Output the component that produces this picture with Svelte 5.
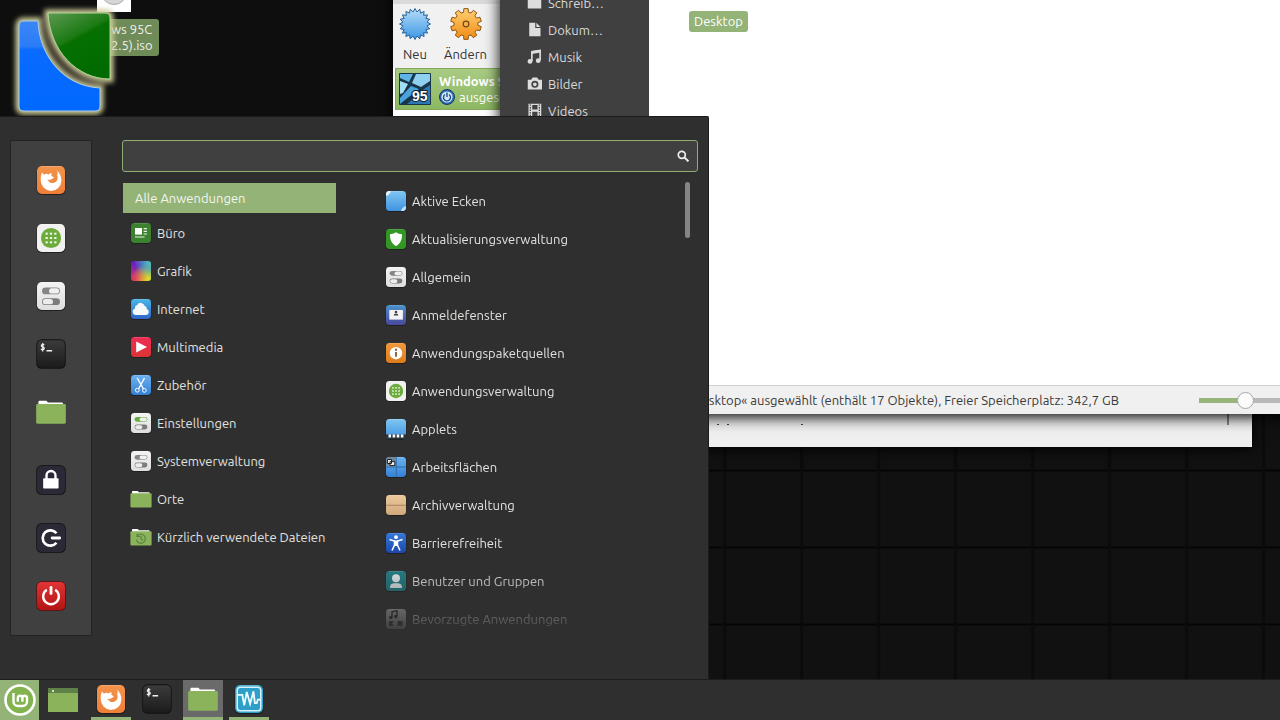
<script>
  const favourites = [
    { icon: 'firefox', label: 'Firefox' },
    { icon: 'software', label: 'Anwendungsverwaltung' },
    { icon: 'system', label: 'Systemeinstellungen' },
    { icon: 'terminal', label: 'Terminal' },
    { icon: 'folder', label: 'Dateien' }
  ];
  const session = [
    { icon: 'lock', label: 'Bildschirm sperren' },
    { icon: 'logout', label: 'Abmelden' },
    { icon: 'power', label: 'Beenden' }
  ];
  const categories = [
    { icon: 'office', label: 'Büro' },
    { icon: 'graphics', label: 'Grafik' },
    { icon: 'internet', label: 'Internet' },
    { icon: 'media', label: 'Multimedia' },
    { icon: 'scissors', label: 'Zubehör' },
    { icon: 'settings', label: 'Einstellungen' },
    { icon: 'system', label: 'Systemverwaltung' },
    { icon: 'folder', label: 'Orte' },
    { icon: 'recent', label: 'Kürzlich verwendete Dateien' }
  ];
  const apps = [
    { icon: 'corners', label: 'Aktive Ecken' },
    { icon: 'shield', label: 'Aktualisierungsverwaltung' },
    { icon: 'system', label: 'Allgemein' },
    { icon: 'login', label: 'Anmeldefenster' },
    { icon: 'info', label: 'Anwendungspaketquellen' },
    { icon: 'software', label: 'Anwendungsverwaltung' },
    { icon: 'applets', label: 'Applets' },
    { icon: 'workspaces', label: 'Arbeitsflächen' },
    { icon: 'archive', label: 'Archivverwaltung' },
    { icon: 'access', label: 'Barrierefreiheit' },
    { icon: 'user', label: 'Benutzer und Gruppen' },
    { icon: 'preferred', label: 'Bevorzugte Anwendungen' }
  ];
  const places = [
    { icon: 'desk', label: 'Schreib…' },
    { icon: 'doc', label: 'Dokum…' },
    { icon: 'music', label: 'Musik' },
    { icon: 'camera', label: 'Bilder' },
    { icon: 'film', label: 'Videos' }
  ];
  const tasks = [
    { icon: 'firefox', label: 'Firefox', open: true },
    { icon: 'terminal', label: 'Terminal' },
    { icon: 'folder', label: 'Dateien', open: true, active: true },
    { icon: 'monitor', label: 'Systemüberwachung', open: true }
  ];

  let query = $state('');
  let zoom = $state(31);

  function star(points, outer, inner) {
    const out = [];
    for (let i = 0; i < points * 2; i++) {
      const r = i % 2 ? inner : outer;
      const a = (Math.PI * i) / points;
      out.push(`${(16 + r * Math.sin(a)).toFixed(2)},${(16 - r * Math.cos(a)).toFixed(2)}`);
    }
    return out.join(' ');
  }

  function gear(teeth, outer, inner) {
    const out = [];
    const step = (Math.PI * 2) / teeth;
    for (let i = 0; i < teeth; i++) {
      for (const [f, r] of [[-0.32, inner], [-0.22, outer], [0.22, outer], [0.32, inner]]) {
        const a = step * (i + f);
        out.push(`${(16 + r * Math.sin(a)).toFixed(2)},${(16 - r * Math.cos(a)).toFixed(2)}`);
      }
    }
    return out.join(' ');
  }
</script>

{#snippet tile(fill)}
  <rect x="-0.3" y="0.3" width="20.6" height="20.4" rx="3.6" fill="#141414" opacity="0.7" />
  <rect width="20" height="20" rx="3.4" {fill} />
  <path d="M3 0.4h14" stroke="#fff" stroke-opacity="0.25" stroke-width="0.6" />
{/snippet}

{#snippet folder()}
  <path d="M1 5V2.8q0-.8.8-.8h5l1 1.200H17.800q.8 0 .8.8v2H1z" fill="#fff" />
  <rect x="-0.6" y="4.200" width="21.2" height="14.200" rx="1" fill="#8ab35c" />
{/snippet}

{#snippet icon(name)}
  <svg class="icon" viewBox="0 0 20 20" aria-hidden="true">
    {#if name === 'firefox'}
      {@render tile('url(#g-orange)')}
      <path d="M3.600 4.600 5 6.200C6 5.500 7.200 5.400 8.400 6c.8-.7 1.600-.8 2.200-.700-.8.8-.5 2 1.500 2.600-.1 1.200-1.900 1.300-2.700 2.100-.9-.2-1.600-.1-2.100.2 1.200.2 1.300 1.700 3 1.900 2.200.3 4.200-1 4.400-3.200.1-1.300-.1-2.200-.7-3.100l1 .3c-.1-1.200-.5-2-1.200-2.800C16.300 4.700 17.500 7.600 17.400 10.500A7.300 7.300 0 0 1 2.700 10.400C2.600 8.200 2.800 6.200 3.600 4.600z" fill="#fff" />
    {:else if name === 'software'}
      {@render tile('#f1f1ef')}
      <circle cx="10" cy="10" r="7.2" fill="#6cab3c" />
      {#each [6.9, 10, 13.1] as x}
        {#each [6.9, 10, 13.1] as y}
          <rect x={x - 0.8} y={y - 0.7} width="1.6" height="1.400" fill="#f4faee" />
        {/each}
      {/each}
    {:else if name === 'system' || name === 'settings'}
      {@render tile('url(#g-light)')}
      <rect x="3.600" y="3.900" width="12.800" height="4.900" rx="2.450" fill={name === 'settings' ? '#62ad35' : '#858585'} />
      <rect x="8.600" y="4.500" width="7.200" height="3.700" rx="1.850" fill="#f0f0f0" />
      <rect x="3.600" y="11.600" width="12.800" height="4.900" rx="2.450" fill="#7b7b7b" />
      <rect x="4.200" y="12.200" width="7.200" height="3.700" rx="1.850" fill="#ececec" />
    {:else if name === 'terminal'}
      <rect x="-0.500" y="-0.500" width="21" height="21" rx="3.800" fill="#111" />
      <rect x="0.100" y="0.100" width="19.800" height="19.800" rx="3.200" fill="url(#g-dark)" />
      <path d="M5.200 3.600C4.200 2.800 2.800 3.400 3.200 4.400c.3.700 2 .5 2 1.500S3.600 7.200 2.800 6.400M4.100 2.200v6" fill="none" stroke="#eee" stroke-width="0.900" />
      <path d="M6.800 7.700h4" stroke="#fff" stroke-width="1" />
    {:else if name === 'folder'}
      {@render folder()}
    {:else if name === 'recent'}
      {@render folder()}
      <path d="M6.700 8.500a4.500 4.500 0 1 1-1.300 4M6 6.700v2.800h2.800M10 8.700V12l2 1.200" fill="none" stroke="#55803a" stroke-width="1.100" />
    {:else if name === 'lock'}
      <rect x="-0.500" y="-0.500" width="21" height="21" rx="3.800" fill="#0d0d0f" />
      <rect width="20" height="20" rx="3.300" fill="#2c2937" />
      <rect x="4.400" y="8.800" width="11" height="7.200" rx="0.600" fill="#fff" />
      <path d="M6.800 9.300V6.800a3.200 3.200 0 0 1 6.400 0v2.500" fill="none" stroke="#fff" stroke-width="1.700" />
    {:else if name === 'logout'}
      <rect x="-0.500" y="-0.500" width="21" height="21" rx="3.800" fill="#0d0d0f" />
      <rect width="20" height="20" rx="3.300" fill="#2c2937" />
      <path d="M13.900 6.600A5.500 5.500 0 1 0 13.900 13.400" fill="none" stroke="#fff" stroke-width="1.900" />
      <path d="M10.800 10h5.400" stroke="#fff" stroke-width="2" stroke-linecap="round" />
    {:else if name === 'power'}
      <rect x="-0.500" y="-0.500" width="21" height="21" rx="3.800" fill="#5d0b0b" />
      <rect width="20" height="20" rx="3.300" fill="url(#g-red)" />
      <path d="M7 5.600A5.600 5.600 0 1 0 13 5.600" fill="none" stroke="#fff" stroke-width="1.700" />
      <path d="M10 3.800v4.400" stroke="#fff" stroke-width="2" stroke-linecap="round" />
    {:else if name === 'office'}
      {@render tile('#3c8130')}
      <path d="M4 5h7v6.600H4z" fill="#fff" />
      <path d="M12.600 5.700H16M12.600 8.300H16M12.600 11H16M4 14h9.600" stroke="#e8f3e4" stroke-width="1.200" />
    {:else if name === 'graphics'}
      <foreignObject x="0" y="0" width="20" height="20"><div class="spectrum"></div></foreignObject>
    {:else if name === 'internet'}
      {@render tile('url(#g-net)')}
      <path d="M5 16a3.300 3.300 0 0 1-.8-6.500 2.800 2.800 0 0 1 2-3.500 4 4 0 0 1 7.400.8 3.200 3.200 0 0 1 2.200 3.200 3.100 3.100 0 0 1-1 6z" fill="#f7f8fa" />
    {:else if name === 'media'}
      {@render tile('url(#g-media)')}
      <path d="M5.200 4.400v11.200L16 10z" fill="#fff" />
    {:else if name === 'scissors'}
      {@render tile('url(#g-blue)')}
      <path d="M6.200 3 12.500 14M13.500 3 7.500 14" stroke="#fff" stroke-width="1.400" />
      <circle cx="6.300" cy="15.200" r="1.900" fill="none" stroke="#fff" />
      <circle cx="13.400" cy="15.400" r="1.900" fill="none" stroke="#fff" />
    {:else if name === 'corners'}
      {@render tile('url(#g-sky)')}
      <path d="M0 5V3.400Q0 0 3.400 0H5Q4 3.500 0 5z" fill="#e8f4fd" />
      <path d="M20 15v1.600q0 3.400-3.400 3.400H15q1-4 5-5z" fill="#c6e2fa" />
    {:else if name === 'shield'}
      {@render tile('#329725')}
      <path d="M10 3.200Q12.500 5 16 5.200C16.200 11 14 14.800 10 17 6 14.800 3.800 11 4 5.200 7.500 5 10 3.200 10 3.200z" fill="#fff" />
    {:else if name === 'login'}
      {@render tile('url(#g-login)')}
      <rect x="3.300" y="5" width="13.600" height="9.600" fill="#f3f3f6" />
      <circle cx="10" cy="7" r="1.300" fill="#444" />
      <path d="M7.700 10.400q0-2 2.300-2t2.300 2z" fill="#444" />
    {:else if name === 'info'}
      {@render tile('url(#g-info)')}
      <circle cx="10" cy="10.200" r="6.200" fill="#fff" />
      <path d="M10 9v4.800" stroke="#8b6a3e" stroke-width="2" />
      <circle cx="10" cy="6.800" r="1.200" fill="#8b6a3e" />
    {:else if name === 'applets'}
      {@render tile('url(#g-sky)')}
      <path d="M0 15.500h20v1.100q0 3.400-3.400 3.400H3.400Q0 20 0 16.600z" fill="#24313b" />
      <path d="M2.500 17h15" stroke="#fff" stroke-width="3" stroke-dasharray="2.600 1.500" />
    {:else if name === 'workspaces'}
      {@render tile('url(#g-blue)')}
      <path d="M10.300 0v20M0 10h20" stroke="#2a69a8" stroke-width="0.900" />
      <path d="M0 9.500V3.400Q0 0 3.400 0H9.800v9.500z" fill="#6f8796" />
      <path d="M1.500 2.500h4v4h-4zM4 4.600h4.800v4H4z" fill="#eee" stroke="#222" stroke-width="1" />
    {:else if name === 'archive'}
      {@render tile('url(#g-tan)')}
      <path d="M0 10.300h20" stroke="#a17e5c" stroke-width="0.900" />
    {:else if name === 'access'}
      {@render tile('url(#g-access)')}
      <circle cx="10" cy="4.200" r="1.900" fill="#fff" />
      <path d="M3.500 6.500 8.500 8v4L6 17.500M16.500 6.500 11.500 8v4l2.500 5.500" fill="none" stroke="#fff" stroke-width="1.500" />
      <path d="M8 7.500h4V13H8z" fill="#fff" />
    {:else if name === 'user'}
      {@render tile('#247e86')}
      <circle cx="10" cy="7.300" r="4" fill="#e6f0f2" />
      <path d="M4 17q-.2-4.500 4-4.800h4q4.200.3 4 4.800z" fill="#e6f0f2" />
    {:else if name === 'preferred'}
      {@render tile('#b8b8b8')}
      <path d="M6 8.500V2.800l5-1v5.500" fill="none" stroke="#222" stroke-width="1.400" />
      <circle cx="4.800" cy="8.500" r="1.700" fill="#222" />
      <circle cx="9.800" cy="7.500" r="1.700" fill="#222" />
      <path d="M11.500 12h5v5h-5zM3 12h5l-2 2.500 2 2.500H3z" fill="#333" />
    {:else if name === 'monitor'}
      {@render tile('#2d9fc9')}
      <rect x="1.600" y="1.600" width="16.800" height="16.800" rx="2.200" fill="none" stroke="#d9f1fa" stroke-width="1.100" />
      <path d="M1.600 7h3.600L6.600 14.500 8.400 5l2.400 8.500L13.200 4.500l1 8.500h1.300l.8-2.500h2" fill="none" stroke="#eefaff" stroke-width="1.300" />
    {:else if name === 'desk'}
      <path d="M1 1h18v17H1z" fill="#ddd" />
    {:else if name === 'doc'}
      <path d="M3 1h8v7h7v11H3zM12.500 1 18 6.800h-5.500z" fill="#ddd" />
    {:else if name === 'music'}
      <path d="M6.500 16V3.500l11-1.500V15" fill="none" stroke="#ddd" stroke-width="2.200" />
      <path d="M6 3 18.500 1v3.500L6 6.500z" fill="#ddd" />
      <circle cx="4" cy="16.500" r="3.200" fill="#ddd" />
      <circle cx="15" cy="15.500" r="3.200" fill="#ddd" />
    {:else if name === 'camera'}
      <path d="M1 5h4.500l2-3h6l2 3H20v13H1z" fill="#ddd" />
      <circle cx="10.500" cy="11" r="3.600" fill="#ddd" stroke="#404040" stroke-width="2.200" />
    {:else if name === 'film'}
      <path d="M2 1h17v18H2z" fill="#ddd" />
      <path d="M7 2.500h7v6H7zM7 11.500h7v6H7z" fill="#404040" />
      <path d="M4.500 2v16M16.500 2v16" stroke="#404040" stroke-width="1.700" stroke-dasharray="1.800 1.600" />
    {/if}
  </svg>
{/snippet}

<svg class="defs" width="0" height="0" aria-hidden="true">
  <defs>
    {#each [
      ['g-orange', '#f3934a', '#ee7f38'],
      ['g-light', '#f4f4f4', '#dedede'],
      ['g-dark', '#3b3b3b', '#1b1b1b'],
      ['g-red', '#e03534', '#b31414'],
      ['g-net', '#49b6e8', '#2f66c8'],
      ['g-media', '#ee2d55', '#dc3434'],
      ['g-blue', '#6cb2f0', '#3580d6'],
      ['g-sky', '#7fc6f2', '#3f93df'],
      ['g-login', '#4a93cb', '#4a479c'],
      ['g-info', '#ef9a3c', '#de7c1c'],
      ['g-tan', '#ecc99c', '#d0a87c'],
      ['g-access', '#3378d6', '#1d47ac'],
      ['g-burst', '#b5dcf8', '#3b97e4'],
      ['g-gear', '#ffcf74', '#f08c13']
    ] as [id, from, to]}
      <linearGradient {id} x1="0" y1="0" x2="0" y2="1">
        <stop offset="0" stop-color={from} />
        <stop offset="1" stop-color={to} />
      </linearGradient>
    {/each}
  </defs>
</svg>

<div class="screen">
  <main class="desktop">
    <div class="desk-file">
      <span class="file-thumb"><svg viewBox="0 0 34 12" aria-hidden="true"><circle cx="17" cy="-8" r="12.500" fill="#d6d6d6" stroke="#aaa" /></svg></span>
      <span class="file-name">ws 95C<br />2.5).iso</span>
    </div>

    <svg class="brand" viewBox="0 0 130 116" aria-hidden="true">
      <defs>
        <filter id="glow" x="-20%" y="-20%" width="140%" height="140%"><feGaussianBlur stdDeviation="2.500" /></filter>
        <linearGradient id="leaf" x1="0" y1="0" x2="0.500" y2="1">
          <stop offset="0" stop-color="#5d9a52" /><stop offset="0.450" stop-color="#1c7a14" /><stop offset="0.500" stop-color="#077003" /><stop offset="1" stop-color="#006b00" />
        </linearGradient>
        <linearGradient id="sea" x1="0" y1="0" x2="0" y2="1">
          <stop offset="0" stop-color="#3a86f4" /><stop offset="0.280" stop-color="#2b7cf8" /><stop offset="0.320" stop-color="#0a6bff" /><stop offset="1" stop-color="#0068ff" />
        </linearGradient>
      </defs>
      <g filter="url(#glow)" fill="none" stroke="#cdcc98" stroke-width="7">
        <path d="M24 21H38C39 53 61 86 100 88V106q0 5-5 5H24q-5 0-5-5V26q0-5 5-5z" />
        <path d="M48 13H105q5 0 5 5V79C77 79 50 51 48 13z" />
      </g>
      <path d="M43 17C45 52 68 82 105 84" fill="none" stroke="#86765f" stroke-width="4" opacity="0.500" filter="url(#glow)" />
      <path d="M24 21H38C39 53 61 86 100 88V106q0 5-5 5H24q-5 0-5-5V26q0-5 5-5z" fill="url(#sea)" stroke="#a9cbe6" stroke-width="1" />
      <path d="M48 13H105q5 0 5 5V79C77 79 50 51 48 13z" fill="url(#leaf)" stroke="#b5d39a" stroke-width="1" />
    </svg>

    <section class="window vm" aria-label="VirtualBox">
      <div class="vm-menu"></div>
      <div class="vm-tools">
        <button class="vm-tool">
          <svg viewBox="0 0 32 32" aria-hidden="true"><polygon points={star(20, 15.5, 12.2)} fill="url(#g-burst)" stroke="#24609c" stroke-width="1" /></svg>
          Neu
        </button>
        <button class="vm-tool">
          <svg viewBox="0 0 32 32" aria-hidden="true"><polygon points={gear(10, 15.5, 12)} fill="url(#g-gear)" stroke="#94520d" stroke-width="1" stroke-linejoin="round" /><circle cx="16" cy="16" r="2.800" fill="#f3b24f" stroke="#7a4811" stroke-width="1.200" /></svg>
          Ändern
        </button>
      </div>
      <div class="vm-item">
        <svg class="vm-thumb" viewBox="0 0 32 32" aria-hidden="true">
          <rect width="32" height="32" rx="1" fill="#18354a" />
          <path d="M1 1h13L10 9 1 5z" fill="#5fb4e6" /><path d="M17 1h14v7L22 14 13 10z" fill="#8fd0f0" />
          <path d="M1 8 9 11 4 20 1 21z" fill="#a4def5" /><path d="M12 13 20 16 11 23 1 31V25z" fill="#4aa3dc" />
          <path d="M25 16 31 12V31H8L22 19z" fill="#2c78b4" />
          <text x="13" y="28" class="thumb-text">95</text>
        </svg>
        <div class="vm-text">
          <strong>Windows 95</strong>
          <span class="vm-state">
            <svg viewBox="0 0 16 16" aria-hidden="true"><circle cx="8" cy="8" r="7.500" fill="#2b6cb4" stroke="#163a63" /><circle cx="8" cy="8" r="5.600" fill="#d5e8f7" /><path d="M6 5.500a3.500 3.500 0 1 0 4 0M8 3.500V8" fill="none" stroke="#1c4f92" stroke-width="1.400" /></svg>
            ausgeschaltet
          </span>
        </div>
      </div>
      <div class="vm-foot"><i></i><i></i><i></i><b></b></div>
    </section>

    <section class="window files" aria-label="Dateien">
      <div class="files-body">
        <nav class="places">
          {#each places as place}
            <a href="#{place.icon}">{@render icon(place.icon)}{place.label}</a>
          {/each}
        </nav>
        <div class="files-view"><span class="selected-name">Desktop</span></div>
      </div>
      <footer class="files-status">
        <span>»Desktop« ausgewählt (enthält 17 Objekte), Freier Speicherplatz: 342,7 GB</span>
        <input type="range" aria-label="Vergrößerung" min="0" max="100" bind:value={zoom} style="--fill: {zoom}%" />
      </footer>
    </section>

    <section class="menu" aria-label="Anwendungsmenü">
      <nav class="favourites">
        {#each favourites as item}
          <button aria-label={item.label}>{@render icon(item.icon)}</button>
        {/each}
        <span class="spacer"></span>
        {#each session as item}
          <button aria-label={item.label}>{@render icon(item.icon)}</button>
        {/each}
      </nav>
      <div class="menu-main">
        <div class="search">
          <input type="text" aria-label="Suchen" bind:value={query} />
          <svg viewBox="0 0 12 12" aria-hidden="true"><circle cx="4.800" cy="4.800" r="3.500" fill="none" stroke="#eee" stroke-width="1.700" /><path d="m7.400 7.400 4 4" stroke="#eee" stroke-width="2" /></svg>
        </div>
        <div class="columns">
          <div class="categories">
            <button class="all">Alle Anwendungen</button>
            {#each categories as item}
              <button class="row">{@render icon(item.icon)}{item.label}</button>
            {/each}
          </div>
          <div class="apps">
            {#each apps as item}
              <button class="row">{@render icon(item.icon)}{item.label}</button>
            {/each}
          </div>
          <div class="scrollbar"></div>
        </div>
      </div>
    </section>
  </main>

  <footer class="taskbar">
    <button class="start" aria-label="Menü">
      <svg viewBox="0 0 32 32" aria-hidden="true">
        <circle cx="16" cy="16" r="14.500" fill="#83b34f" stroke="#fff" stroke-width="2.600" />
        <path d="M9.500 9v8.500a4.500 4.500 0 0 0 4.500 4.500h4.500a4.500 4.500 0 0 0 4.500-4.500V14a2.300 2.300 0 0 0-4.600 0v3.800M18.400 14a2.300 2.300 0 0 0-4.600 0v3.800" fill="none" stroke="#fff" stroke-width="2.400" />
      </svg>
    </button>
    <button class="show-desktop" aria-label="Schreibtisch anzeigen">
      <svg viewBox="0 0 30 24" aria-hidden="true"><rect width="30" height="24" fill="#8ab35c" /><rect width="30" height="5" fill="#5d8146" /><circle cx="5" cy="3" r="1" fill="#fff" /></svg>
    </button>
    <div class="tasks">
      {#each tasks as task}
        <button class="task" class:open={task.open} class:active={task.active} aria-label={task.label}>{@render icon(task.icon)}</button>
      {/each}
    </div>
  </footer>
</div>

<style>
  :global(body) {
    margin: 0;
    overflow: hidden;
    background: #101010;
  }

  button {
    padding: 0;
    border: 0;
    background: none;
    color: inherit;
    font: inherit;
  }

  .defs {
    position: absolute;
  }

  .icon {
    display: block;
    flex: none;
    width: 20px;
    height: 20px;
    overflow: visible;
  }

  .spectrum {
    width: 20px;
    height: 20px;
    border-radius: 3px;
    background:
      radial-gradient(circle at 0 100%, #f0325a, transparent 60%),
      radial-gradient(circle at 100% 0, #55cfc0, transparent 60%),
      radial-gradient(circle at 100% 100%, #e0f01e, transparent 70%),
      radial-gradient(circle at 60% 100%, #f8b420, transparent 60%),
      linear-gradient(100deg, #7a18b8, #3a3fc8 60%);
  }

  .screen {
    display: flex;
    flex-direction: column;
    height: 100vh;
    font-family: Ubuntu, "Noto Sans", sans-serif;
    font-size: 13px;
    line-height: 16px;
    color: #e2e2e0;
  }

  .desktop {
    position: relative;
    flex: 1;
    overflow: hidden;
    background:
      linear-gradient(90deg, #0e0e0e 400px, transparent 700px),
      repeating-linear-gradient(90deg, transparent 0 29px, #0b0b0b 31px, #0a0a0a 32px, transparent 34px 77px),
      repeating-linear-gradient(180deg, transparent 0 7px, #050505 8px, #050505 9px, transparent 10px 77px),
      #111;
  }

  .desk-file {
    position: absolute;
    left: 97px;
    top: 0;
    display: flex;
    flex-direction: column;
    align-items: flex-start;
    gap: 7px;
  }

  .file-thumb {
    width: 34px;
    height: 12px;
    background: #fff;
  }

  .file-thumb svg {
    display: block;
  }

  .file-name {
    padding: 2px 6px 3px 14px;
    border-radius: 3px;
    background: #6f8b57;
    color: #f0f0f0;
  }

  .brand {
    position: absolute;
    left: 0;
    top: 0;
    width: 130px;
    height: 116px;
  }

  .window {
    position: absolute;
    display: flex;
    flex-direction: column;
  }

  .vm {
    left: 393px;
    right: 28px;
    top: -10px;
    bottom: 232px;
    background: #fff;
    color: #333;
    box-shadow: 0 2px 12px #000;
  }

  .vm-menu {
    height: 14px;
    background: #dadada;
  }

  .vm-tools {
    display: flex;
    height: 60px;
    padding: 4px 0 0 5px;
    gap: 12px;
    background: #f1f1f1;
  }

  .vm-tool {
    display: flex;
    flex-direction: column;
    align-items: center;
    gap: 6px;
    height: 56px;
    min-width: 34px;
  }

  .vm-tool svg {
    width: 32px;
    height: 32px;
  }

  .vm-item {
    display: flex;
    gap: 8px;
    margin: 0 2px;
    padding: 4px 3px;
    border: 1px solid #86a85c;
    background: linear-gradient(#a9cb84, #8db862);
    color: #fff;
  }

  .vm-thumb {
    width: 32px;
    height: 32px;
  }

  .thumb-text {
    font: bold 14px "Liberation Sans", sans-serif;
    fill: #fff;
    stroke: #123;
    stroke-width: 2px;
    paint-order: stroke;
  }

  .vm-state {
    display: flex;
    gap: 4px;
  }

  .vm-state svg {
    width: 16px;
    height: 16px;
  }

  .vm-foot {
    display: flex;
    align-items: flex-end;
    height: 33px;
    margin-top: auto;
    padding-left: 324px;
    background: #efefef;
  }

  .vm-foot i {
    width: 2px;
    height: 1px;
    margin: 0 8px 22px 0;
    background: #444;
  }

  .vm-foot i:nth-child(3) {
    margin-left: 64px;
  }

  .vm-foot b {
    width: 2px;
    height: 11px;
    margin: 0 23px 22px auto;
    background: #888;
  }

  .files {
    left: 500px;
    right: -60px;
    top: -11px;
    bottom: 265px;
    background: #fff;
    box-shadow: 0 3px 14px #000;
  }

  .files-body {
    display: flex;
    flex: 1;
    min-height: 0;
  }

  .places {
    flex: none;
    width: 149px;
    background: #404040;
  }

  .places a {
    display: flex;
    align-items: center;
    gap: 6px;
    height: 27px;
    padding-left: 27px;
    color: #d9d9d9;
    text-decoration: none;
  }

  .places .icon {
    width: 15px;
    height: 15px;
  }

  .files-view {
    padding: 22px 40px;
  }

  .selected-name {
    display: block;
    padding: 2px 5px 3px;
    border-radius: 3px;
    background: #93b377;
    color: #fff;
  }

  .files-status {
    display: flex;
    align-items: center;
    justify-content: flex-end;
    gap: 80px;
    height: 28px;
    border-top: 1px solid #cdd0c8;
    background: #f0f0f0;
    color: #3a3a3a;
    white-space: nowrap;
  }

  .files-status input {
    flex: none;
    width: 141px;
    height: 18px;
    margin: 0;
    appearance: none;
    background: linear-gradient(90deg, #97b57a var(--fill), #b9b9b9 var(--fill)) center / 100% 5px no-repeat;
  }

  .files-status input::-webkit-slider-thumb {
    appearance: none;
    box-sizing: border-box;
    width: 17px;
    height: 17px;
    border: 1px solid #a8a8a8;
    border-radius: 50%;
    background: #fbfbfb;
  }

  .menu {
    position: absolute;
    left: 0;
    bottom: 0;
    display: flex;
    align-items: flex-end;
    gap: 31px;
    box-sizing: border-box;
    width: 709px;
    max-width: 100%;
    padding: 23px 10px 41px 11px;
    border-top: 1px solid #1c1c1c;
    border-right: 1px solid #1c1c1c;
    border-radius: 0 2px 0 0;
    background: #2f2f2f;
  }

  .favourites {
    flex: none;
    display: flex;
    flex-direction: column;
    width: 80px;
    margin-bottom: 3px;
    padding: 10px 0;
    border-radius: 1px;
    background: #404040;
    box-shadow: 0 0 0 1px #222;
  }

  .favourites button {
    display: grid;
    place-items: center;
    height: 58px;
  }

  .favourites .icon,
  .task .icon {
    width: 28px;
    height: 28px;
  }

  .spacer {
    height: 10px;
  }

  .menu-main {
    flex: 1;
    display: flex;
    flex-direction: column;
    gap: 10px;
    min-width: 0;
  }

  .search {
    display: flex;
    align-items: center;
    box-sizing: border-box;
    height: 32px;
    padding: 0 8px 0 10px;
    border: 1px solid #90ad75;
    border-radius: 3px;
    background: #404040;
  }

  .search input {
    flex: 1;
    min-width: 0;
    border: 0;
    outline: 0;
    background: none;
    color: inherit;
    font: inherit;
  }

  .search svg {
    width: 12px;
    height: 12px;
  }

  .columns {
    display: flex;
    align-items: flex-start;
    padding: 0 8px 0 1px;
  }

  .categories {
    display: flex;
    flex-direction: column;
    width: 213px;
  }

  .all {
    height: 30px;
    margin: 1px 0;
    padding-left: 12px;
    background: #93b377;
    color: #f3f5ef;
    text-align: left;
  }

  .row {
    display: flex;
    align-items: center;
    gap: 6px;
    height: 38px;
    padding-left: 8px;
    white-space: nowrap;
  }

  .apps {
    flex: 1;
    display: flex;
    flex-direction: column;
    padding-left: 42px;
    mask-image: linear-gradient(to top, transparent, #000 72px);
  }

  .scrollbar {
    width: 5px;
    height: 56px;
    border-radius: 3px;
    background: #858585;
  }

  .taskbar {
    display: flex;
    flex: none;
    height: 40px;
    border-top: 1px solid #1c1c1c;
    background: #2f2f2f;
  }

  .start {
    display: grid;
    place-items: center;
    width: 39px;
    background: #93b377;
  }

  .start svg {
    width: 32px;
    height: 32px;
  }

  .show-desktop {
    display: grid;
    place-items: center;
    width: 48px;
  }

  .show-desktop svg {
    width: 30px;
    height: 24px;
  }

  .tasks {
    display: flex;
    gap: 6px;
    padding-left: 4px;
  }

  .task {
    box-sizing: border-box;
    display: grid;
    place-items: center;
    width: 40px;
    border-bottom: 3px solid transparent;
  }

  .task.open {
    border-bottom-color: #93b377;
  }

  .task.active {
    background: #6a6a6a;
    background-clip: padding-box;
  }
</style>
